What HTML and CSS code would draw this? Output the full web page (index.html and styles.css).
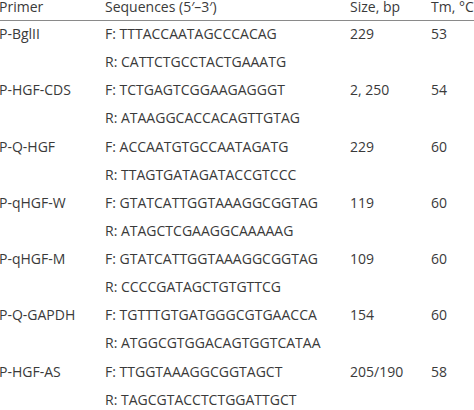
FILE: index.html
```html
<!DOCTYPE html>
<html>
<head>
<meta charset="utf-8">
<link rel="stylesheet" href="styles.css">
</head>
<body>
<div class="primers">
  <div class="head">Primer</div><div class="head">Sequences (5′–3′)</div><div class="head">Size, bp</div><div class="head">Tm, °C</div>

  <div class="cell">P-BglII</div><div class="cell">F: TTTACCAATAGCCCACAG</div><div class="cell">229</div><div class="cell">53</div>
  <div class="cell"></div><div class="cell">R: CATTCTGCCTACTGAAATG</div><div class="cell"></div><div class="cell"></div>

  <div class="cell">P-HGF-CDS</div><div class="cell">F: TCTGAGTCGGAAGAGGGT</div><div class="cell">2, 250</div><div class="cell">54</div>
  <div class="cell"></div><div class="cell">R: ATAAGGCACCACAGTTGTAG</div><div class="cell"></div><div class="cell"></div>

  <div class="cell">P-Q-HGF</div><div class="cell">F: ACCAATGTGCCAATAGATG</div><div class="cell">229</div><div class="cell">60</div>
  <div class="cell"></div><div class="cell">R: TTAGTGATAGATACCGTCCC</div><div class="cell"></div><div class="cell"></div>

  <div class="cell">P-qHGF-W</div><div class="cell">F: GTATCATTGGTAAAGGCGGTAG</div><div class="cell">119</div><div class="cell">60</div>
  <div class="cell"></div><div class="cell">R: ATAGCTCGAAGGCAAAAAG</div><div class="cell"></div><div class="cell"></div>

  <div class="cell">P-qHGF-M</div><div class="cell">F: GTATCATTGGTAAAGGCGGTAG</div><div class="cell">109</div><div class="cell">60</div>
  <div class="cell"></div><div class="cell">R: CCCCGATAGCTGTGTTCG</div><div class="cell"></div><div class="cell"></div>

  <div class="cell">P-Q-GAPDH</div><div class="cell">F: TGTTTGTGATGGGCGTGAACCA</div><div class="cell">154</div><div class="cell">60</div>
  <div class="cell"></div><div class="cell">R: ATGGCGTGGACAGTGGTCATAA</div><div class="cell"></div><div class="cell"></div>

  <div class="cell">P-HGF-AS</div><div class="cell">F: TTGGTAAAGGCGGTAGCT</div><div class="cell">205/190</div><div class="cell">58</div>
  <div class="cell"></div><div class="cell">R: TAGCGTACCTCTGGATTGCT</div><div class="cell"></div><div class="cell"></div>
</div>
</body>
</html>
```

FILE: styles.css
```css
html, body {
  margin: 0;
  padding: 0;
  background: #ffffff;
  overflow: hidden;
}
body {
  width: 474px;
  height: 410px;
}
.primers {
  display: grid;
  grid-template-columns: 106px 245px 81px 60px;
  grid-template-rows: 21px;
  grid-auto-rows: 28.13px;
  margin-left: -1px;
  width: 492px;
  font-family: "Open Sans", "Liberation Sans", sans-serif;
  font-size: 14px;
  color: #3a3a3a;
}
.head {
  box-sizing: border-box;
  height: 21px;
  line-height: 14px;
  border-bottom: 1px solid #8a8a8a;
  white-space: nowrap;
}
.cell {
  line-height: 26.13px;
  white-space: nowrap;
}
```
